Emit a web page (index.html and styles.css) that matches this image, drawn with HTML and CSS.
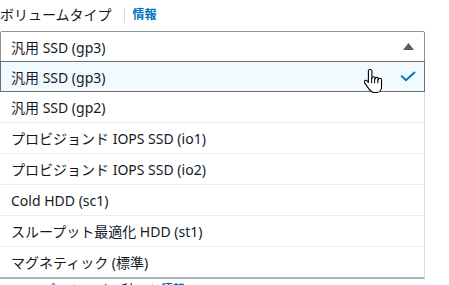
FILE: index.html
```html
<!DOCTYPE html>
<html lang="ja">
<head>
    <meta charset="UTF-8">
    <meta name="viewport" content="width=device-width, initial-scale=1.0">
    <title>ボリュームタイプ</title>
    <link rel="stylesheet" href="styles.css">
</head>
<body>
    <div class="field">
        <div class="label-row">
            <span class="label">ボリュームタイプ</span>
            <span class="divider"></span>
            <a class="info" href="#">情報</a>
        </div>
        <div class="select-wrap">
            <div class="select">
                <span>汎用 SSD (gp3)</span>
                <svg class="caret" width="11" height="7" viewBox="0 0 11 7"><path d="M0 7L5.5 0L11 7Z" fill="#545b64"/></svg>
            </div>
            <ul class="options">
                <li class="selected">
                    <span>汎用 SSD (gp3)</span>
                    <svg class="check" width="16" height="11" viewBox="0 0 16 11"><path d="M1.2 4.6L6 9.2L15 1" fill="none" stroke="#0073bb" stroke-width="2"/></svg>
                </li>
                <li>汎用 SSD (gp2)</li>
                <li>プロビジョンド IOPS SSD (io1)</li>
                <li>プロビジョンド IOPS SSD (io2)</li>
                <li>Cold HDD (sc1)</li>
                <li>スループット最適化 HDD (st1)</li>
                <li>マグネティック (標準)</li>
            </ul>
            <svg class="pointer" width="19" height="26" viewBox="0 0 19 26">
                <path d="M6 1.5c-.9 0-1.6.7-1.6 1.6v11.3l-1.4-1.5c-.7-.7-1.8-.8-2.4-.1-.5.6-.5 1.500 0 2.1l4.3 6c1.1 1.6 2.7 3.6 5 3.6h2.6c3 0 5-2.4 5-5.3v-7.3c0-.9-.7-1.600-1.6-1.6s-1.6.7-1.6 1.6v-.9c0-.9-.7-1.6-1.6-1.6s-1.6.7-1.6 1.6v-.6c0-.9-.7-1.6-1.6-1.6s-1.6.7-1.6 1.6V3.1c0-.9-.7-1.6-1.7-1.6z" fill="#fff" stroke="#000" stroke-width="1.1" stroke-linejoin="round"/>
                <path d="M10.6 10.5v4.8M13.8 11.2v4.1M7.6 10v5.3" fill="none" stroke="#000" stroke-width="1"/>
            </svg>
        </div>
    </div>

    <div class="field next">
        <div class="label-row">
            <span class="label">スループット (MiB/秒)</span>
            <span class="divider"></span>
            <a class="info" href="#">情報</a>
        </div>
    </div>
</body>
</html>
```

FILE: styles.css
```css
body {
    font-family: "Noto Sans", "Noto Sans CJK JP", sans-serif;
    margin: 0;
    padding: 4px 0 0 0;
    background-color: #fff;
    color: #16191f;
    font-size: 14px;
    width: 425px;
}

.label-row {
    display: flex;
    align-items: center;
    height: 22px;
    line-height: 22px;
}

.label {
    font-size: 14px;
}

.divider {
    width: 1px;
    height: 15px;
    background-color: #d5dbdb;
    margin: 1px 8px 0 12px;
}

.info {
    font-size: 12px;
    font-weight: bold;
    color: #0073bb;
    text-decoration: none;
}

.select-wrap {
    position: relative;
    margin-top: 5px;
}

.select {
    display: flex;
    align-items: center;
    justify-content: space-between;
    box-sizing: border-box;
    height: 31px;
    padding: 0 10px 0 10px;
    border: 1px solid #879596;
    border-radius: 2px 2px 0 0;
}

.options {
    position: absolute;
    top: 30px;
    left: 0;
    right: 0;
    margin: 0;
    padding: 0;
    list-style: none;
    background: #fff;
    border-right: 1px solid #d5dbdb;
    border-bottom: 2px solid #aab7b8;
    box-shadow: -1px 0 1px rgba(0, 28, 36, 0.08);
    z-index: 2;
}

.options li {
    display: flex;
    align-items: center;
    justify-content: space-between;
    box-sizing: border-box;
    height: 31px;
    padding: 0 10px 0 11px;
    border-bottom: 1px solid #eaeded;
}

.options li:last-child {
    border-bottom: none;
    height: 30px;
}

.options li.selected {
    background-color: #f1faff;
    border: 1px solid #687078;
    margin-right: -1px;
    padding-left: 10px;
    padding-right: 8px;
}

.pointer {
    position: absolute;
    top: 37px;
    left: 364px;
    z-index: 3;
}

.next {
    margin-top: 217px;
}
```
